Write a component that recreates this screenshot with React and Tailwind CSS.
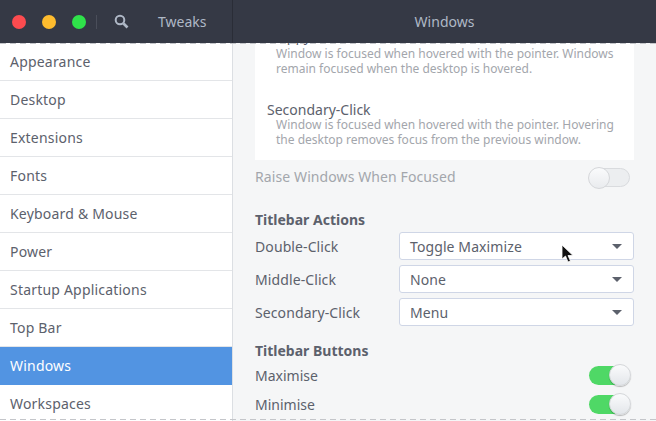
const tweaks = ['Appearance', 'Desktop', 'Extensions', 'Fonts', 'Keyboard & Mouse', 'Power', 'Startup Applications', 'Top Bar', 'Windows', 'Workspaces'];

function Toggle() {
  return (
    <div className="relative h-[19px] w-[41px] rounded-full bg-[#4fd866]">
      <div className="absolute -top-[2px] right-[-1px] h-[22px] w-[22px] rounded-full border border-[#d5d7da] bg-gradient-to-b from-[#fafbfc] to-[#e3e6ea] shadow-[0_1px_1px_rgba(0,0,0,0.25)]" />
    </div>
  );
}

function Combo({ label, value }) {
  return (
    <div className="flex h-[28px] items-center tracking-[0.1px]">
      <span className="w-[144px] text-[#5c616c]">{label}</span>
      <div className="flex h-[28px] w-[235px] items-center justify-between rounded-[3px] border border-[#cfd6e6] bg-white pl-[10px] pr-[11px] text-[#5c616c]">
        <span>{value}</span>
        <svg width="10" height="5" viewBox="0 0 10 5"><path d="M0 0h10L5 5z" fill="#5c616c" /></svg>
      </div>
    </div>
  );
}

export default function App() {
  return (
    <div className="relative flex h-[421px] w-[656px] flex-col overflow-hidden bg-[#f5f6f7] font-['Noto_Sans',sans-serif] text-[14px]">
      {/* Header bar */}
      <header className="z-10 flex h-[43px] shrink-0 bg-[#353945] text-[#afb8c6]">
        <div className="flex w-[233px] items-center border-r border-[#2a2d37] pl-[12px]">
          <span className="h-[14px] w-[14px] rounded-full bg-[#fc4b4f]" />
          <span className="ml-[16px] h-[14px] w-[14px] rounded-full bg-[#febc2e]" />
          <span className="ml-[16px] h-[14px] w-[14px] rounded-full bg-[#2fe24a]" />
          <span className="ml-[10px] h-[14px] w-px bg-[#4a4e5a]" />
          <svg className="ml-[17px]" width="15" height="15" viewBox="0 0 15 15" fill="none" stroke="#afb8c6">
            <circle cx="6" cy="6" r="4.3" strokeWidth="2" />
            <path d="M9.5 9.5l4 4" strokeWidth="2.6" />
          </svg>
          <span className="ml-[29px]">Tweaks</span>
        </div>
        <div className="flex flex-1 items-center justify-center">Windows</div>
      </header>

      <div className="flex min-h-0 flex-1">
        {/* Sidebar */}
        <nav className="w-[233px] shrink-0 border-r border-[#dcdfe3] bg-white tracking-[0.2px]">
          {tweaks.map((name) => (
            <div
              key={name}
              className={`flex h-[38px] items-center border-b pl-[10px] ${name === 'Windows' ? 'border-[#5294e2] bg-[#5294e2] text-white' : 'border-[#e3e5e8] text-[#5c616c]'}`}
            >
              {name}
            </div>
          ))}
        </nav>

        {/* Settings pane, scrolled down */}
        <main className="min-w-0 flex-1 overflow-hidden pl-[22px] pr-[22px]">
          <div className="-mt-[17px] flex h-[134px] flex-col bg-white">
            <div className="pl-[12px] leading-[20px] text-[#5c616c]">Sloppy</div>
            <p className="pl-[21px] pr-[8px] text-[12px] leading-[15px] text-[#a3a6ac]">
              Window is focused when hovered with the pointer. Windows remain focused when the desktop is hovered.
            </p>
            <div className="mt-[26px] pl-[12px] leading-[15px] text-[#5c616c]">Secondary-Click</div>
            <p className="pl-[21px] pr-[8px] text-[12px] leading-[15px] text-[#a3a6ac]">
              Window is focused when hovered with the pointer. Hovering the desktop removes focus from the previous window.
            </p>
          </div>

          <div className="flex h-[32px] items-center justify-between tracking-[0.1px] text-[#a3a6ac]">
            <span>Raise Windows When Focused</span>
            <div className="relative mr-[4px] mt-[2px] h-[19px] w-[41px] rounded-full border border-[#d9dbde] bg-[#eceef0]">
              <div className="absolute -left-[2px] -top-[2px] h-[22px] w-[22px] rounded-full border border-[#d5d7da] bg-gradient-to-b from-[#fafbfc] to-[#e9ebee]" />
            </div>
          </div>

          <h2 className="mt-[18px] font-bold leading-[20px] text-[#5c616c]">Titlebar Actions</h2>
          <div className="mt-[2px] flex flex-col gap-[5px]">
            <Combo label="Double-Click" value="Toggle Maximize" />
            <Combo label="Middle-Click" value="None" />
            <Combo label="Secondary-Click" value="Menu" />
          </div>

          <h2 className="mt-[15px] font-bold leading-[20px] text-[#5c616c]">Titlebar Buttons</h2>
          <div className="flex h-[29px] items-center justify-between pr-[4px] text-[#5c616c]">
            <span>Maximise</span>
            <Toggle />
          </div>
          <div className="flex h-[29px] items-center justify-between pr-[4px] text-[#5c616c]">
            <span>Minimise</span>
            <Toggle />
          </div>
        </main>
      </div>

      {/* Overshoot lines at the top and bottom of the scrolled area */}
      <div className="absolute inset-x-0 top-[43px] z-10 h-px bg-[repeating-linear-gradient(90deg,#c4c6ca_0_6px,transparent_6px_10px)]" />
      <div className="absolute inset-x-0 top-[419px] z-10 h-px bg-[repeating-linear-gradient(90deg,#c4c6ca_0_6px,transparent_6px_10px)]" />

      {/* Mouse pointer */}
      <svg className="absolute left-[561px] top-[244px] z-20" width="13" height="19" viewBox="0 0 13 19">
        <path d="M1 1v14l3.5-3 2.5 6 2.5-1-2.5-5.5H12z" fill="#111" stroke="#fff" strokeWidth="0.8" />
      </svg>
    </div>
  );
}
